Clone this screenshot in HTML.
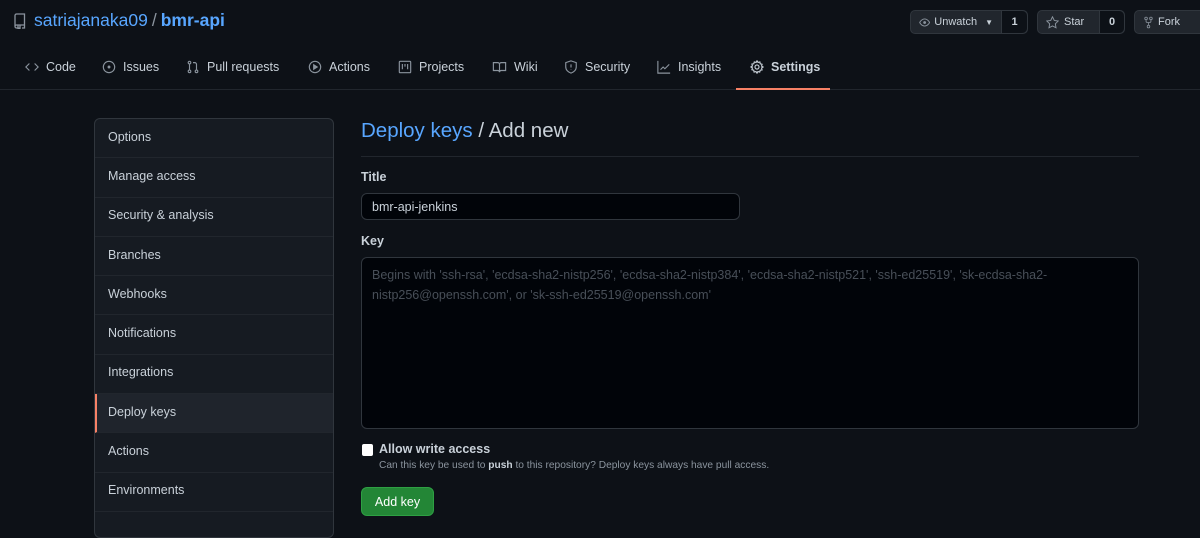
<!DOCTYPE html>
<html><head><meta charset="utf-8"><style>
*{box-sizing:border-box;margin:0;padding:0}
body{width:1200px;height:523px;overflow:hidden;background:#0d1117;color:#c9d1d9;font-family:"Liberation Sans",sans-serif;font-size:12.5px;position:relative}
.abs{position:absolute}
.repo{left:13px;top:10px;font-size:17.5px;color:#58a6ff;display:flex;align-items:center;gap:4px}
.repo b{font-weight:bold}
.btn{position:absolute;top:10px;height:24px;border:1px solid #30363d;border-radius:5px;background:#21262d;display:flex;font-size:11px;color:#c9d1d9}
.btn span{display:flex;align-items:center;padding:0 8px}
.btn .c{background:#0d1117;border-left:1px solid #30363d;font-weight:bold;border-radius:0 5px 5px 0}
.tabs{left:0;top:52px;height:38px;width:1200px;border-bottom:1px solid #21262d}
.tab{position:absolute;top:0;height:38px;display:flex;align-items:flex-start;padding-top:8px;gap:7px;font-size:12.5px;color:#c9d1d9}
.tab svg{stroke:#8b949e;fill:none;stroke-width:1.3}
.side{left:94px;top:118px;width:240px;height:420px;border:1px solid #30363d;border-radius:6px;background:#161b22;overflow:hidden}
.side div{height:39.3px;border-bottom:1px solid #21262d;padding-left:13px;display:flex;align-items:center;font-size:12.5px;padding-bottom:3px}
.side .act{background:#1f242c;border-left:2px solid #f78166;padding-left:11px}
</style></head><body>
<div class="abs repo"><svg width="14" height="16" viewBox="0 0 14 16"><path d="M2 2.5a1.5 1.5 0 011.5-1.5h8v11h-8A1.5 1.5 0 002 13.5zM2 13.5A1.5 1.5 0 003.5 15H5M9 15h2.5v-3M5 12v4l1-.8 1 .8v-4" fill="none" stroke="#8b949e" stroke-width="1.3"/></svg><span style="margin-left:3px">satriajanaka09</span><span style="color:#8b949e">/</span><b>bmr-api</b></div>
<div class="btn" style="left:910px;width:118px"><span style="gap:4px;width:90px"><svg width="13" height="13" viewBox="0 0 16 16"><path d="M1 8s2.5-5 7-5 7 5 7 5-2.5 5-7 5-7-5-7-5z" fill="none" stroke="#8b949e" stroke-width="1.3"/><circle cx="8" cy="8" r="2" fill="#8b949e"/></svg>Unwatch <span style="padding:0 0 0 4px;font-size:8px">▼</span></span><span class="c" style="flex:1;justify-content:center">1</span></div>
<div class="btn" style="left:1037px;width:88px"><span style="gap:5px;width:61px"><svg width="13" height="13" viewBox="0 0 16 16"><path d="M8 1l2.2 4.5 4.8.7-3.5 3.4.8 4.9L8 12.2 3.7 14.5l.8-4.9L1 6.2l4.8-.7z" fill="none" stroke="#8b949e" stroke-width="1.2"/></svg>Star</span><span class="c" style="flex:1;justify-content:center">0</span></div>
<div class="btn" style="left:1134px;width:80px"><span style="gap:4px"><svg width="11" height="13" viewBox="0 0 12 16"><circle cx="3" cy="3" r="1.6" fill="none" stroke="#8b949e"/><circle cx="9" cy="3" r="1.6" fill="none" stroke="#8b949e"/><circle cx="6" cy="13" r="1.6" fill="none" stroke="#8b949e"/><path d="M3 5v1.5a1.5 1.5 0 001.5 1.5h3A1.5 1.5 0 009 6.5V5M6 8v3.4" fill="none" stroke="#8b949e"/></svg>Fork</span></div>
<div class="abs tabs">
<div class="tab" style="left:25px"><svg width="14" height="14" viewBox="0 0 16 16"><path d="M5 4L1 8l4 4M11 4l4 4-4 4"/></svg>Code</div>
<div class="tab" style="left:102px"><svg width="14" height="14" viewBox="0 0 16 16"><circle cx="8" cy="8" r="6.5"/><circle cx="8" cy="8" r="1" fill="#8b949e"/></svg>Issues</div>
<div class="tab" style="left:186px"><svg width="14" height="14" viewBox="0 0 16 16"><circle cx="4" cy="3" r="1.5"/><circle cx="4" cy="13" r="1.5"/><circle cx="12" cy="13" r="1.5"/><path d="M4 4.5v7M12 11.5V5a2 2 0 00-2-2H8"/></svg>Pull requests</div>
<div class="tab" style="left:308px"><svg width="14" height="14" viewBox="0 0 16 16"><circle cx="8" cy="8" r="6.5"/><path d="M6.5 5.5v5l4-2.5z" fill="#8b949e"/></svg>Actions</div>
<div class="tab" style="left:398px"><svg width="14" height="14" viewBox="0 0 16 16"><rect x="1.5" y="1.5" width="13" height="13" rx="1"/><path d="M5 4.5v6M8 4.5v3M11 4.5v6"/></svg>Projects</div>
<div class="tab" style="left:492px"><svg width="15" height="14" viewBox="0 0 16 16"><path d="M1 3h5a2 2 0 012 2v9a2 2 0 00-2-2H1zM15 3h-5a2 2 0 00-2 2v9a2 2 0 012-2h5z"/></svg>Wiki</div>
<div class="tab" style="left:564px"><svg width="14" height="14" viewBox="0 0 16 16"><path d="M8 1l6 2v5c0 3.5-3 6-6 7-3-1-6-3.5-6-7V3z"/><path d="M8 5v3.5M8 10.5v.5"/></svg>Security</div>
<div class="tab" style="left:657px"><svg width="14" height="14" viewBox="0 0 16 16"><path d="M1 1v14h14M4 11l3-3 2 2 5-5"/></svg>Insights</div>
<div class="tab" style="left:736px;width:94px;padding-left:14px;font-weight:bold;border-bottom:2px solid #f78166"><svg width="14" height="14" viewBox="0 0 16 16" style="stroke:#c9d1d9"><circle cx="8" cy="8" r="2.3"/><path d="M8 1l1.2 1.8 2.1-.6.4 2.1 2.1.6-.6 2.1L15 8l-1.8 1.2.6 2.1-2.1.4-.6 2.1-2.1-.6L8 15l-1.2-1.8-2.1.6-.4-2.1-2.1-.6.6-2.1L1 8l1.8-1.2-.6-2.1 2.1-.4.6-2.1 2.1.6z"/></svg>Settings</div>
</div>
<div class="abs side">
<div>Options</div><div>Manage access</div><div>Security &amp; analysis</div><div>Branches</div><div>Webhooks</div><div>Notifications</div><div>Integrations</div><div class="act">Deploy keys</div><div>Actions</div><div>Environments</div><div></div>
</div>
<div class="abs" style="left:361px;top:119px;font-size:20.5px"><span style="color:#58a6ff">Deploy keys</span> / Add new</div>
<div class="abs" style="left:361px;top:156px;width:778px;border-top:1px solid #21262d"></div>
<div class="abs" style="left:361px;top:170px;font-weight:bold;font-size:12.5px">Title</div>
<div class="abs" style="left:361px;top:193px;width:379px;height:27px;border:1px solid #30363d;border-radius:6px;background:#010409;padding:6px 10px;font-size:12.5px">bmr-api-jenkins</div>
<div class="abs" style="left:361px;top:234px;font-weight:bold;font-size:12.5px">Key</div>
<div class="abs" style="left:361px;top:257px;width:778px;height:172px;border:1px solid #30363d;border-radius:6px;background:#010409;padding:7px 10px;font-size:12.5px;line-height:20px;color:#484f58">Begins with 'ssh-rsa', 'ecdsa-sha2-nistp256', 'ecdsa-sha2-nistp384', 'ecdsa-sha2-nistp521', 'ssh-ed25519', 'sk-ecdsa-sha2-<br>nistp256@openssh.com', or 'sk-ssh-ed25519@openssh.com'</div>
<div class="abs" style="left:362px;top:444px;width:11px;height:12px;background:#fff;border-radius:2px"></div>
<div class="abs" style="left:379px;top:442px;font-weight:bold;font-size:12.5px">Allow write access</div>
<div class="abs" style="left:379px;top:460px;font-size:10.2px;color:#8b949e">Can this key be used to <b style="color:#c9d1d9">push</b> to this repository? Deploy keys always have pull access.</div>
<div class="abs" style="left:361px;top:487px;width:73px;height:29px;background:#238636;border:1px solid #2ea043;border-radius:6px;color:#fff;display:flex;align-items:center;justify-content:center;font-size:12.5px">Add key</div>
</body></html>
